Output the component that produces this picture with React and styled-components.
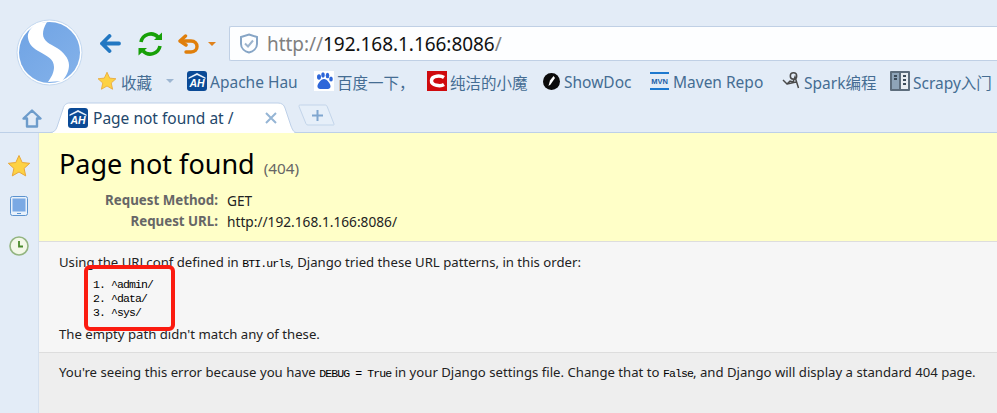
import React from "react";
import styled, { createGlobalStyle } from "styled-components";

const Global = createGlobalStyle`
  html, body { margin: 0; padding: 0; background: #eeeeee; }
  body { width: 997px; height: 413px; overflow: hidden; font-family: "Noto Sans", sans-serif; }
`;
const CJK = `"Noto Sans", "Noto Sans CJK SC", sans-serif`;

const Browser = styled.div`width: 997px; height: 413px; display: flex; flex-direction: column; overflow: hidden; position: relative;`;
const Chrome = styled.header`height: 133px; flex: none; background: #e3ecf7; border-bottom: 1px solid #bdd0e8; box-sizing: border-box; display: flex; flex-direction: column;`;
const TopArea = styled.div`display: flex; height: 100px; padding: 19px 0 0 16px; box-sizing: border-box;`;
const LogoSlot = styled.div`width: 67px; height: 68px; flex: none;`;
const Controls = styled.div`flex: 1; min-width: 0; display: flex; flex-direction: column; padding-left: 14px;`;
const NavRow = styled.div`display: flex; align-items: center; height: 35px; margin-top: 7px;`;
const NavButton = styled.span`display: flex; width: ${p => p.$w}px; padding-left: ${p => p.$pl ?? 0}px; box-sizing: border-box; height: 34px; align-items: center; flex: none;`;
const AddressBar = styled.div`flex: 1; height: 35px; box-sizing: border-box; background: #fdfeff; border: 1px solid #c0d0e5; border-right: 0; border-radius: 2px 0 0 2px; display: flex; align-items: center; padding-left: 9px; white-space: nowrap; overflow: hidden;`;
const Url = styled.span`font-family: "Noto Sans", sans-serif; font-size: 19px; color: #111; margin-left: 8px; letter-spacing: -.05px;`;
const UrlDim = styled.span`color: #808080;`;
const Bookmarks = styled.nav`display: flex; align-items: center; height: 28px; margin-top: 6px; white-space: nowrap;`;
const Bookmark = styled.span`display: flex; align-items: center; flex: none; width: ${p => p.$w}px; gap: ${p => p.$gap ?? 3}px; font-family: ${CJK}; font-size: 15.5px; color: #456d93;`;
const BookmarkLabel = styled.span`padding-top: 2px;`;
const Caret = styled.span`width: 0; height: 0; border: ${p => p.$s ?? 4}px solid transparent; border-top: ${p => p.$s ?? 4}px solid ${p => p.$c}; border-bottom: 0; display: inline-block; flex: none; margin-left: ${p => p.$ml ?? 0}px;`;
const TabRow = styled.div`display: flex; align-items: flex-end; height: 32px; padding-left: 22px;`;
const HomeSlot = styled.span`width: 28px; height: 24px; flex: none; display: flex; margin-bottom: 4px;`;
const Tab = styled.div`position: relative; width: 247px; height: 31px; flex: none; display: flex; align-items: center; padding-left: 18px; box-sizing: border-box; gap: 5px; margin-bottom: -1px;`;
const TabShape = styled.svg`position: absolute; inset: 0; z-index: 0;`;
const TabTitle = styled.span`position: relative; font-family: "Noto Sans", sans-serif; font-size: 15.5px; color: #23476b; white-space: nowrap; flex: 1;`;
const TabClose = styled.span`position: relative; display: flex; margin-right: 20px;`;
const NewTab = styled.span`width: 37px; height: 22px; display: flex; margin-left: 1px; margin-bottom: 6px; flex: none;`;
const Body = styled.div`flex: 1; display: flex; min-height: 0;`;
const Sidebar = styled.aside`width: 39px; flex: none; background: #e3ecf7; border-right: 1px solid #d5e0ee; box-sizing: border-box; display: flex; flex-direction: column; align-items: center; padding-top: 21px;`;
const SideItem = styled.span`display: flex; margin-top: ${p => p.$mt ?? 0}px;`;
const Page = styled.main`flex: 1; min-width: 0; display: flex; flex-direction: column; color: #000; font-family: "Noto Sans", sans-serif; font-size: 13.17px;`;
const Summary = styled.section`height: 109px; box-sizing: border-box; background: #ffffc8; border-bottom: 1px solid #dddddd; padding: 12px 20px 0;`;
const Title = styled.h1`margin: 0; font-weight: 400; font-size: 27px; line-height: 38px; color: #000; white-space: nowrap;`;
const Status = styled.span`font-size: 15.3px; color: #666666; margin-left: 2px;`;
const Meta = styled.dl`display: grid; grid-template-columns: 159px auto; column-gap: 9px; margin: 3px 0 0; justify-content: start; line-height: 21px;`;
const Label = styled.dt`text-align: right; font-weight: 700; color: #666666; font-size: 13.3px;`;
const Value = styled.dd`margin: 0; color: #222; font-size: 13.7px;`;
const Info = styled.section`height: 111px; box-sizing: border-box; background: #f6f6f6; padding: 12px 20px 0; border-bottom: 1px solid #dddddd; color: #222;`;
const Para = styled.p`margin: 0; line-height: 17px; white-space: nowrap;`;
const Code = styled.code`font-family: "Liberation Mono", monospace; font-size: 11.5px; letter-spacing: -.9px; color: #000;`;
const Patterns = styled.ol`margin: 6px 0 6px; padding-left: 52px; font-family: "Liberation Mono", monospace; font-size: 11.5px; letter-spacing: -.9px; line-height: 14px; color: #000;`;
const Pattern = styled.li``;
const Explain = styled.section`flex: 1; background: #eeeeee; padding: 11px 20px 0; color: #222;`;
const Annotation = styled.div`position: absolute; left: 84px; top: 265px; width: 91px; height: 66px; box-sizing: border-box; border: 4px solid #fb1b10; border-radius: 6px;`;

const AH = () => (
  <svg width="20" height="20" viewBox="0 0 20 20" style={{ flex: "none", position: "relative" }}>
    <rect width="20" height="20" rx="3" fill="#0b4a96" />
    <path d="M1.500 6.500 10 2l8.500 4.500v1.500L10 4 1.500 8z" fill="#e9f1fb" />
    <text x="10" y="15.800" textAnchor="middle" fontFamily="Liberation Sans" fontStyle="italic" fontWeight="700" fontSize="10.500" fill="#fff">AH</text>
  </svg>
);
const Star = ({ size = 20 }) => (
  <svg width={size} height={size} viewBox="0 0 24 24" style={{ flex: "none" }}>
    <path d="M12 1.500l3.200 7 7.500.800-5.600 5.100 1.600 7.500L12 18l-6.700 3.900 1.600-7.500-5.600-5.100 7.500-.800z" fill="#fdd243" stroke="#e8a73a" strokeWidth="1" strokeLinejoin="round" />
  </svg>
);

export default function App() {
  return (
    <Browser>
      <Global />
      <Chrome>
        <TopArea>
          <LogoSlot>
            <svg width="67" height="68" viewBox="0 0 67 68">
              <defs>
                <linearGradient id="sky" x1="0" y1="0" x2="1" y2="1"><stop offset="0" stopColor="#6fa3e4" /><stop offset="1" stopColor="#84b2ea" /></linearGradient>
              </defs>
              <circle cx="33.500" cy="33.500" r="32.500" fill="#fff" stroke="#c3d8f0" strokeWidth="1" />
              <circle cx="33.500" cy="33.500" r="30.500" fill="url(#sky)" />
              <path d="M21 4C14 9 11 14 12 19 13 26 18 30 24 33 31 37 38 40 38 48 38 53 36 57 32 63L46 62C51 57 53 51 53 46 53 39 47 33 41 29 34 25 27 22 27 15 27 11 28 8 31 3Z" fill="#fff" />
            </svg>
          </LogoSlot>
          <Controls>
            <NavRow>
              <NavButton $w={40} $pl={2}>
                <svg width="22" height="19" viewBox="0 0 22 19"><path d="M20 9.500H3M10.500 2 3 9.500l7.500 7.500" fill="none" stroke="#2277c2" strokeWidth="3.800" strokeLinejoin="round" strokeLinecap="round" /></svg>
              </NavButton>
              <NavButton $w={41}>
                <svg width="27" height="26" viewBox="0 0 27 26" fill="none" stroke="#17a008" strokeWidth="3.600"><path d="M4 11a10 10 0 0 1 17-5" /><path d="M23 15a10 10 0 0 1-17 5" /><path d="M17 9h8V1.500z" fill="#17a008" stroke="none" /><path d="M10 17H1.500v7.500z" fill="#17a008" stroke="none" /></svg>
              </NavButton>
              <NavButton $w={30}>
                <svg width="21" height="20" viewBox="0 0 21 20" fill="none" stroke="#e07f0b" strokeWidth="3.400" strokeLinecap="round" strokeLinejoin="round"><path d="M7.500 2 2 7l6 4" /><path d="M3 7h10c4 0 6 2.500 6 5.500S17 18 13 18H8" /></svg>
              </NavButton>
              <NavButton $w={21}><Caret $c="#e0821c" /></NavButton>
              <AddressBar>
                <svg width="20" height="21" viewBox="0 0 20 21" fill="none"><path d="M10 1.500 18 4v7c0 4.500-4 7.500-8 8.500C6 18.500 2 15.500 2 11V4z" stroke="#86a5c6" strokeWidth="2" /><path d="M6 10.500l3 3 5-6" stroke="#9db4cd" strokeWidth="2" /></svg>
                <Url><UrlDim>http://</UrlDim>192.168.1.166:8086<UrlDim>/</UrlDim></Url>
              </AddressBar>
            </NavRow>
            <Bookmarks>
              <Bookmark $w={90} $gap={4}><Star /><BookmarkLabel>收藏</BookmarkLabel><Caret $c="#9db6d2" $ml={10} /></Bookmark>
              <Bookmark $w={127}><AH /><BookmarkLabel>Apache Hau</BookmarkLabel></Bookmark>
              <Bookmark $w={113}>
                <svg width="20" height="20" viewBox="0 0 20 20" style={{ flex: "none" }}><rect width="20" height="20" fill="#fff" /><g fill="#2d66d9"><ellipse cx="5" cy="6" rx="2" ry="2.800" /><ellipse cx="9" cy="4" rx="1.800" ry="2.800" /><ellipse cx="13.500" cy="4.500" rx="1.800" ry="2.800" /><ellipse cx="17" cy="8" rx="1.800" ry="2.500" /><path d="M10 8c3 0 7 5 6.500 8-.5 2.500-4 2-6.500 2s-6 .5-6.500-2C3 13 7 8 10 8z" /></g></svg>
                <BookmarkLabel>百度一下，</BookmarkLabel>
              </Bookmark>
              <Bookmark $w={116}>
                <svg width="20" height="20" viewBox="0 0 20 20" style={{ flex: "none" }}><rect width="20" height="20" fill="#cf0a0e" /><path d="M17 6.500C14 4.500 5 4 4.500 9.500 4 15 14 15.500 17 13.500" fill="none" stroke="#fff" strokeWidth="3.500" /></svg>
                <BookmarkLabel>纯洁的小魔</BookmarkLabel>
              </Bookmark>
              <Bookmark $w={107} $gap={4}>
                <svg width="17" height="17" viewBox="0 0 17 17" style={{ flex: "none" }}><circle cx="8.500" cy="8.500" r="8.500" fill="#0b0b0b" /><path d="M10.500 3 7 7.500 5.500 13l2-1.500L12 5z" fill="#fff" /></svg>
                <BookmarkLabel>ShowDoc</BookmarkLabel>
              </Bookmark>
              <Bookmark $w={132} $gap={4}>
                <svg width="19" height="20" viewBox="0 0 19 20" style={{ flex: "none" }}><rect y="1" width="19" height="2" fill="#1c78cf" /><rect y="17" width="19" height="2" fill="#1c78cf" /><text x="9.500" y="13" textAnchor="middle" fontFamily="Liberation Sans" fontWeight="700" fontSize="7.500" fill="#1c5fa8">MVN</text></svg>
                <BookmarkLabel>Maven Repo</BookmarkLabel>
              </Bookmark>
              <Bookmark $w={108} $gap={4}>
                <svg width="18" height="20" viewBox="0 0 18 20" fill="none" stroke="#4a4a4a" strokeWidth="1.500" style={{ flex: "none" }}><circle cx="11.500" cy="5" r="3.200" /><path d="M1 9l4 4 3-3 3 1 2-5 3.500 11M5 13l9-2" /></svg>
                <BookmarkLabel>Spark编程</BookmarkLabel>
              </Bookmark>
              <Bookmark $w={110}>
                <svg width="20" height="20" viewBox="0 0 20 20" style={{ flex: "none" }}><rect width="20" height="20" rx="1" fill="#5d6d7c" /><rect x="2" y="2" width="7" height="16" fill="#8ea4b8" /><rect x="11" y="2" width="7" height="16" fill="#e8edf1" /><path d="M4 5h3M4 8h3M13 5h3M13 9h3M13 13h3" stroke="#3d4c5a" strokeWidth="2" /></svg>
                <BookmarkLabel>Scrapy入门</BookmarkLabel>
              </Bookmark>
            </Bookmarks>
          </Controls>
        </TopArea>
        <TabRow>
          <HomeSlot>
            <svg width="20" height="19" viewBox="0 0 20 19" fill="none" stroke="#6d9ccb" strokeWidth="2.400" strokeLinejoin="round" style={{ marginTop: 5 }}><path d="M1.500 9.500 10 1.500l8.500 8H15v8H5v-8z" /></svg>
          </HomeSlot>
          <Tab>
            <TabShape width="247" height="31" viewBox="0 0 247 31"><path d="M0 30.500C4 30.500 6 28 7 25L13 7C14 3 16 1 20 1H228C232 1 234 3 235 6L241 24C243 29 244 30.500 247 30.500" fill="#fff" stroke="#bdd0e8" /><rect x="3" y="30" width="241" height="2" fill="#fff" /></TabShape>
            <AH />
            <TabTitle>Page not found at /</TabTitle>
            <TabClose><svg width="12" height="12" viewBox="0 0 12 12"><path d="M1 1l10 10M11 1 1 11" stroke="#95b5d5" strokeWidth="2" /></svg></TabClose>
          </Tab>
          <NewTab>
            <svg width="37" height="22" viewBox="0 0 37 22" fill="#e6eff9" stroke="#c3d5ea"><path d="M2.500 1H27c1 0 1.800.5 2.200 1.500L36 20c.3 .8 0 1-1 1H10c-1 0-1.500-.3-2-1.200L1 2.500C.6 1.500 1.200 1 2.500 1z" /><path d="M14 11.500h11M19.500 6v11" stroke="#7fa6cf" strokeWidth="2" /></svg>
          </NewTab>
        </TabRow>
      </Chrome>
      <Body>
        <Sidebar>
          <Star size={24} />
          <SideItem $mt={18}>
            <svg width="18" height="20" viewBox="0 0 18 20"><rect x=".5" y=".5" width="17" height="19" rx="2" fill="#e8f1fb" stroke="#5c93cf" /><rect x="2.500" y="2.500" width="13" height="13" fill="#7aa9e4" /><rect x="7" y="17" width="4" height="1" fill="#5c93cf" /></svg>
          </SideItem>
          <SideItem $mt={20}>
            <svg width="20" height="20" viewBox="0 0 20 20" fill="none"><circle cx="10" cy="10" r="9" fill="#f3f8e8" stroke="#93b581" strokeWidth="1.600" /><path d="M10 5v5.500h4" stroke="#4a8a2c" strokeWidth="1.800" /></svg>
          </SideItem>
        </Sidebar>
        <Page>
          <Summary>
            <Title>Page not found <Status>(404)</Status></Title>
            <Meta>
              <Label>Request Method:</Label><Value>GET</Value>
              <Label>Request URL:</Label><Value>http://192.168.1.166:8086/</Value>
            </Meta>
          </Summary>
          <Info>
            <Para>Using the URLconf defined in <Code>BTI.urls</Code>, Django tried these URL patterns, in this order:</Para>
            <Patterns>
              <Pattern>^admin/</Pattern>
              <Pattern>^data/</Pattern>
              <Pattern>^sys/</Pattern>
            </Patterns>
            <Para>The empty path didn't match any of these.</Para>
          </Info>
          <Explain>
            <Para>You're seeing this error because you have <Code>DEBUG = True</Code> in your Django settings file. Change that to <Code>False</Code>, and Django will display a standard 404 page.</Para>
          </Explain>
        </Page>
      </Body>
      <Annotation />
    </Browser>
  );
}
